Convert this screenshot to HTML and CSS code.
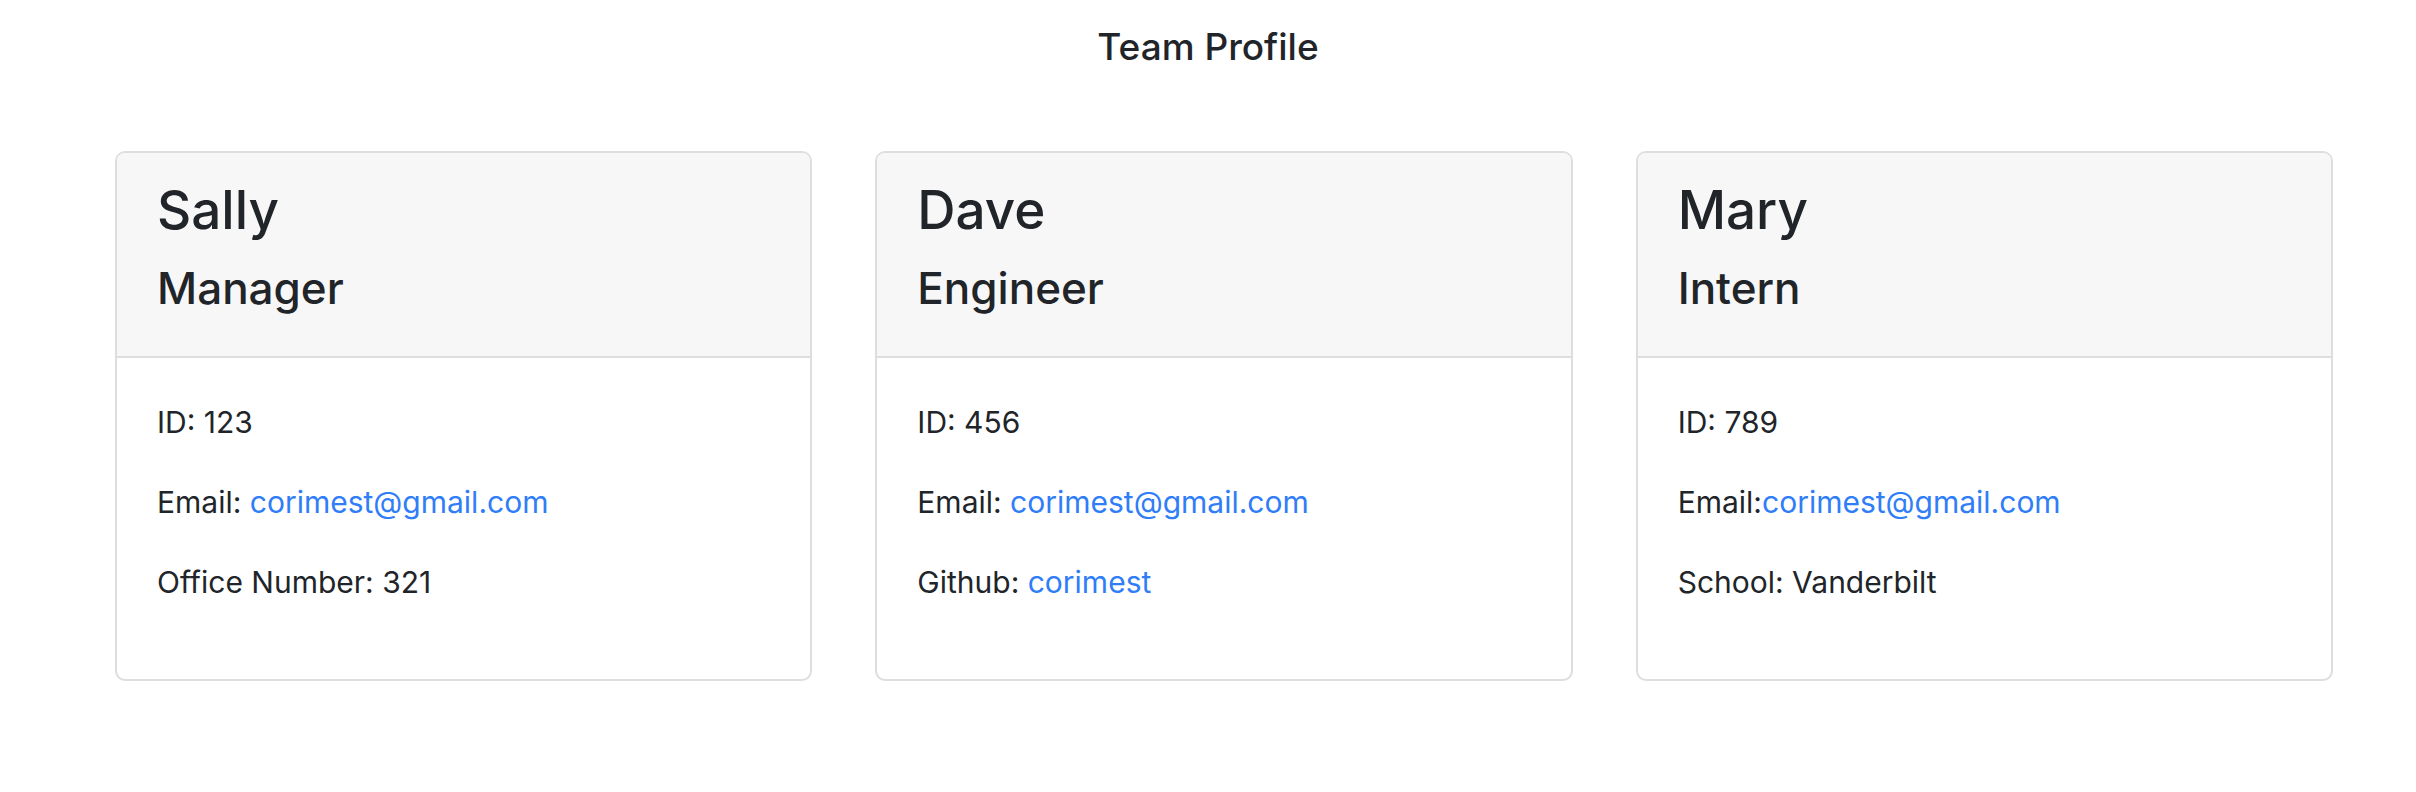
FILE: index.html
```html
<!DOCTYPE html>
<html>
<head>
    <meta charset="UTF-8">
    <meta name="viewport" content="width=device-width, initial-scale=1.0">
    <title>Team Profile</title>
    <link rel="stylesheet" href="styles.css">
</head>
<body>
<h1 class="page-title">Team Profile</h1>

<div class="team-container">
    <div class="card">
        <div class="card-header">
            <h2 class="card-name">Sally</h2>
            <h3 class="card-role">Manager</h3>
        </div>
        <div class="card-body">
            <p>ID: 123</p>
            <p>Email: <a href="mailto:corimest@gmail.com">corimest@gmail.com</a></p>
            <p>Office Number: 321</p>
        </div>
    </div>

    <div class="card">
        <div class="card-header">
            <h2 class="card-name">Dave</h2>
            <h3 class="card-role">Engineer</h3>
        </div>
        <div class="card-body">
            <p>ID: 456</p>
            <p>Email: <a href="mailto:corimest@gmail.com">corimest@gmail.com</a></p>
            <p>Github: <a href="https://github.com/corimest">corimest</a></p>
        </div>
    </div>

    <div class="card">
        <div class="card-header">
            <h2 class="card-name">Mary</h2>
            <h3 class="card-role">Intern</h3>
        </div>
        <div class="card-body">
            <p>ID: 789</p>
            <p>Email:<a href="mailto:corimest@gmail.com">corimest@gmail.com</a></p>
            <p>School: Vanderbilt</p>
        </div>
    </div>
</div>
</body>
</html>
```

FILE: styles.css
```css
:root {
    --text-color: #212529;
    --link-color: #2f7df7;
    --border-color: #dedede;
    --header-bg: #f7f7f7;
}

body {
    margin: 0;
    font-family: Inter, 'Noto Sans', sans-serif;
    color: var(--text-color);
    background-color: white;
}

.page-title {
    text-align: center;
    font-size: 37px;
    font-weight: 500;
    line-height: 48px;
    margin: 23px 0 0;
}

.team-container {
    display: grid;
    grid-template-columns: repeat(3, 1fr);
    gap: 63px;
    padding: 0 83px 0 115px;
    margin-top: 80px;
}

.card {
    border: 2px solid var(--border-color);
    border-radius: 10px;
    overflow: hidden;
}

.card-header {
    background-color: var(--header-bg);
    border-bottom: 2px solid var(--border-color);
    padding: 25px 40px 42px;
}

.card-name {
    font-size: 53px;
    font-weight: 500;
    line-height: 64px;
    margin: 0 0 20px;
}

.card-role {
    font-size: 44px;
    font-weight: 500;
    line-height: 52px;
    margin: 0;
}

.card-body {
    padding: 44px 40px 77px;
}

.card-body p {
    font-size: 30px;
    line-height: 40px;
    margin: 0 0 40px;
}

.card-body p:last-child {
    margin-bottom: 0;
}

a {
    color: var(--link-color);
    text-decoration: none;
}
```
